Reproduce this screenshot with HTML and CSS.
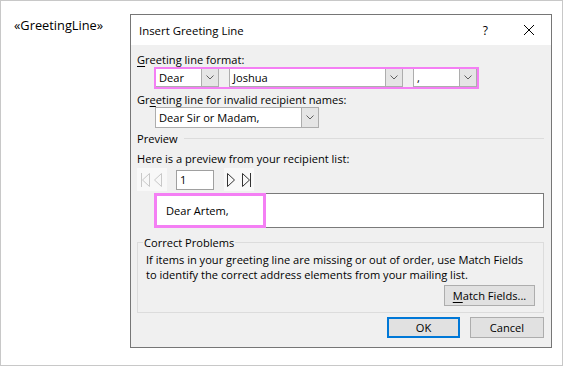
FILE: index.html
```html
<!DOCTYPE html>
<html>
<head>
<meta charset="utf-8">
<title>Insert Greeting Line</title>
<link rel="stylesheet" href="styles.css">
</head>
<body>
<div class="frame">
  <div class="doc">«GreetingLine»</div>
  <div class="dialog">
    <div class="titlebar">
      <span class="title">Insert Greeting Line</span>
      <span class="help">?</span>
      <svg class="close" width="10" height="10" viewBox="0 0 10 10"><path d="M0 0L10 10M10 0L0 10" stroke="#000" stroke-width="1" fill="none"/></svg>
    </div>
    <div class="content">
      <div class="label"><u>G</u>reeting line format:</div>
      <div class="hl-row">
        <div class="combo c-salute"><span class="val">Dear</span><span class="drop"><svg width="8" height="5" viewBox="0 0 8 5"><path d="M0.5 0.5L4 4L7.5 0.5" stroke="#606060" fill="none"/></svg></span></div>
        <div class="combo c-name"><span class="val">Joshua</span><span class="drop"><svg width="8" height="5" viewBox="0 0 8 5"><path d="M0.5 0.5L4 4L7.5 0.5" stroke="#606060" fill="none"/></svg></span></div>
        <div class="combo c-punct"><span class="val">,</span><span class="drop"><svg width="8" height="5" viewBox="0 0 8 5"><path d="M0.5 0.5L4 4L7.5 0.5" stroke="#606060" fill="none"/></svg></span></div>
      </div>
      <div class="label label-gap">Gr<u>e</u>eting line for invalid recipient names:</div>
      <div class="combo c-invalid"><span class="val">Dear Sir or Madam,</span><span class="drop"><svg width="8" height="5" viewBox="0 0 8 5"><path d="M0.5 0.5L4 4L7.5 0.5" stroke="#606060" fill="none"/></svg></span></div>
      <div class="group-head"><span>Preview</span><span class="rule"></span></div>
      <div class="label label-gap2">Here is a preview from your recipient list:</div>
      <div class="nav">
        <div class="navpair">
          <svg width="30" height="23" viewBox="0 0 30 23"><g stroke="#c8c8c8" fill="none"><path d="M4.5 5V19"/><path d="M12.5 5.5L5.5 12L12.5 18.5Z"/><path d="M24.5 5.5L17.5 12L24.5 18.5Z"/></g></svg>
        </div>
        <div class="num">1</div>
        <div class="navpair">
          <svg width="30" height="23" viewBox="0 0 30 23"><g stroke="#333" fill="none"><path d="M3.5 5.5L10.5 12L3.5 18.5Z"/><path d="M18.5 5.5L25.5 12L18.5 18.5Z"/><path d="M26.5 5V19"/></g></svg>
        </div>
      </div>
      <div class="preview"><div class="preview-hl">Dear Artem,</div></div>
      <fieldset class="problems">
        <legend>Correct Problems</legend>
        <p>If items in your greeting line are missing or out of order, use Match Fields<br>to identify the correct address elements from your mailing list.</p>
        <div class="fields-row"><button class="btn btn-fields"><u>M</u>atch Fields...</button></div>
      </fieldset>
      <div class="actions">
        <button class="btn btn-ok">OK</button>
        <button class="btn btn-cancel">Cancel</button>
      </div>
    </div>
  </div>
</div>
</body>
</html>
```
FILE: styles.css
```css
* { box-sizing: border-box; }
html, body { margin: 0; padding: 0; background: #fff; }
body {
  font-family: "Open Sans", "Noto Sans", sans-serif;
  font-size: 11.1px;
  color: #000;
}
u { text-decoration: underline; text-underline-offset: 2px; }

.frame {
  width: 563px;
  height: 366px;
  border: 1px solid #c8c8c8;
  display: flex;
  align-items: flex-start;
  padding: 13px 0 0 13px;
}
.doc {
  width: 116px;
  padding-top: 4px;
  font-size: 12.8px;
  line-height: 15px;
}

.dialog {
  width: 422px;
  height: 334px;
  border: 1px solid #767676;
  background: #f0f0f0;
  display: flex;
  flex-direction: column;
}
.titlebar {
  height: 30px;
  flex: none;
  background: #fff;
  display: flex;
  align-items: center;
  padding-left: 8px;
  line-height: 15px;
  font-size: 11.4px;
}
.help { margin-left: auto; margin-right: 36px; font-size: 12px; }
.close { margin-right: 17px; }

.content {
  padding: 7px 7px 9px 6px;
  display: flex;
  flex-direction: column;
  line-height: 15px;
}
.label { height: 15px; white-space: nowrap; }
.label-gap { margin-top: 3px; }
.label-gap2 { margin-top: 5px; }

.combo {
  display: flex;
  background: #fff;
  border: 1px solid #adadad;
}
.combo .val { flex: 1; padding-left: 3px; display: flex; align-items: center; }
.drop {
  width: 17px;
  flex: none;
  background: #e5e5e5;
  border-left: 1px solid #adadad;
  display: flex;
  align-items: center;
  justify-content: center;
}

.hl-row {
  margin-left: 17px;
  width: 325px;
  height: 22px;
  border: 2px solid #f47ff4;
  display: flex;
  gap: 10px;
}
.hl-row .combo { height: 18px; border-top: 0; }
.c-salute { width: 63px; border-left: 0; }
.c-name { width: 174px; }
.c-punct { width: 64px; border-right: 0; }
.c-punct .drop { border-right: 1px solid #adadad; width: 18px; }
.c-punct .val { align-items: flex-start; padding-top: 1px; }

.c-invalid {
  margin-left: 18px;
  width: 164px;
  height: 21px;
}

.group-head {
  margin-top: 3px;
  height: 15px;
  display: flex;
  align-items: center;
}
.rule { flex: 1; border-top: 1px solid #dcdcdc; margin-left: 6px; }

.nav {
  margin-top: 2px;
  height: 23px;
  display: flex;
  align-items: center;
}
.navpair { width: 30px; height: 23px; background: #f8f8f8; display: flex; }
.num {
  margin: 0 10px 0 9px;
  width: 38px;
  height: 20px;
  border: 1px solid #a0a0a0;
  background: #fff;
  padding-left: 3px;
  display: flex;
  align-items: center;
}

.preview {
  margin-top: 2px;
  margin-left: 17px;
  height: 35px;
  border: 1px solid #7a7a7a;
  background: #fff;
  display: flex;
}
.preview-hl {
  margin: -1px 0 -1px -1px;
  width: 112px;
  border: 3px solid #f47ff4;
  padding-left: 9px;
  display: flex;
  align-items: center;
}

.problems {
  margin: 7px 0 0 0;
  padding: 2px 8px 6px 8px;
  border: 1px solid #dcdcdc;
  min-width: 0;
}
.problems legend {
  padding: 0 1px;
  margin-left: -3px;
  line-height: 15px;
}
.problems p { margin: 0; white-space: nowrap; }
.fields-row { display: flex; justify-content: flex-end; margin-top: 3px; }

.btn {
  font: inherit;
  color: #000;
  height: 21px;
  background: #e1e1e1;
  border: 1px solid #adadad;
  padding: 0;
  line-height: 15px;
}
.btn-fields { width: 91px; }
.actions {
  margin-top: 4px;
  display: flex;
  justify-content: flex-end;
  gap: 10px;
}
.btn-ok { width: 73px; border: 2px solid #0078d7; }
.btn-cancel { width: 74px; }
```
